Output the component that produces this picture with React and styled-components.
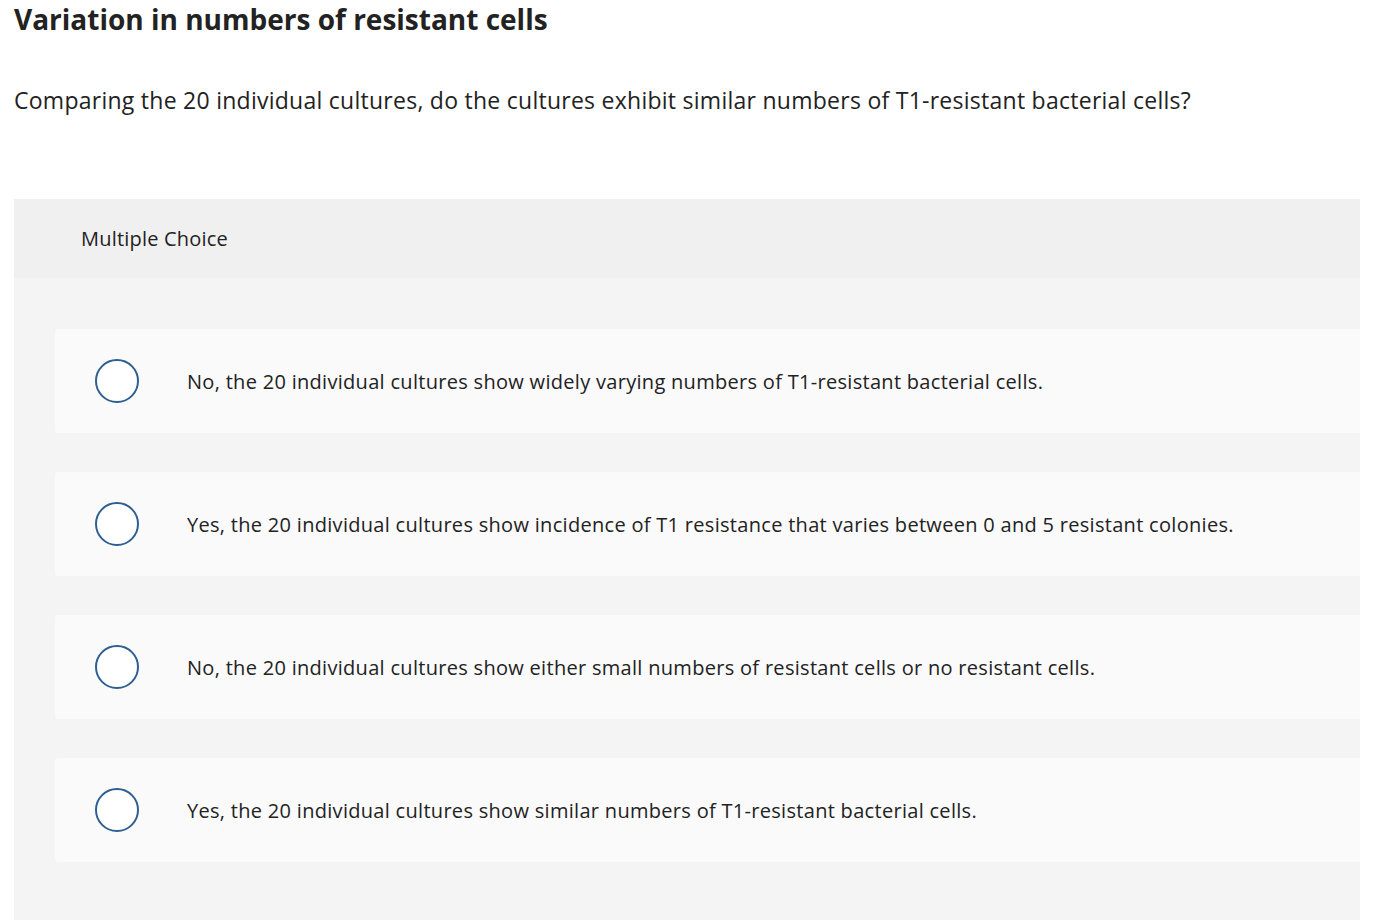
import React from "react";
import styled, { createGlobalStyle } from "styled-components";

const GlobalStyle = createGlobalStyle`
  body {
    margin: 0;
    background: #fff;
    font-family: "Open Sans", Lato, Arial, sans-serif;
    color: #222;
  }
`;

const Page = styled.div`
  padding: 0 19px 40px 14px;
`;

const Title = styled.h1`
  font-size: 28px;
  font-weight: 700;
  margin: 0;
  line-height: 38px;
  color: #222;
`;

const Question = styled.p`
  font-size: 23px;
  letter-spacing: 0.26px;
  margin: 47px 0 0;
  line-height: 30px;
  color: #222;
`;

const Panel = styled.section`
  margin-top: 84px;
  background: #f4f4f4;
  padding-bottom: 70px;
`;

const PanelHeader = styled.div`
  background: #f0f0f0;
  height: 79px;
  display: flex;
  align-items: center;
  padding-left: 67px;
  font-size: 20px;
  letter-spacing: 0.2px;
  color: #222;
`;

const Options = styled.div`
  display: flex;
  flex-direction: column;
  gap: 39px;
  padding: 51px 0 0 41px;
`;

const Option = styled.label`
  display: flex;
  align-items: center;
  height: 104px;
  background: #fafafa;
  border-radius: 4px 0 0 4px;
  padding-left: 40px;
  font-size: 20px;
  letter-spacing: 0.3px;
  color: #222;
  cursor: pointer;
`;

const Radio = styled.span`
  width: 40px;
  height: 40px;
  border: 2px solid #2d5f93;
  border-radius: 50%;
  background: #fff;
  flex-shrink: 0;
  margin-right: 48px;
`;

const choices = [
  "No, the 20 individual cultures show widely varying numbers of T1-resistant bacterial cells.",
  "Yes, the 20 individual cultures show incidence of T1 resistance that varies between 0 and 5 resistant colonies.",
  "No, the 20 individual cultures show either small numbers of resistant cells or no resistant cells.",
  "Yes, the 20 individual cultures show similar numbers of T1-resistant bacterial cells.",
];

const App = () => {
  return (
    <>
      <GlobalStyle />
      <Page>
        <Title>Variation in numbers of resistant cells</Title>
        <Question>
          Comparing the 20 individual cultures, do the cultures exhibit similar
          numbers of T1-resistant bacterial cells?
        </Question>
        <Panel>
          <PanelHeader>Multiple Choice</PanelHeader>
          <Options>
            {choices.map((c) => (
              <Option key={c}>
                <Radio />
                {c}
              </Option>
            ))}
          </Options>
        </Panel>
      </Page>
    </>
  );
};

export default App;
